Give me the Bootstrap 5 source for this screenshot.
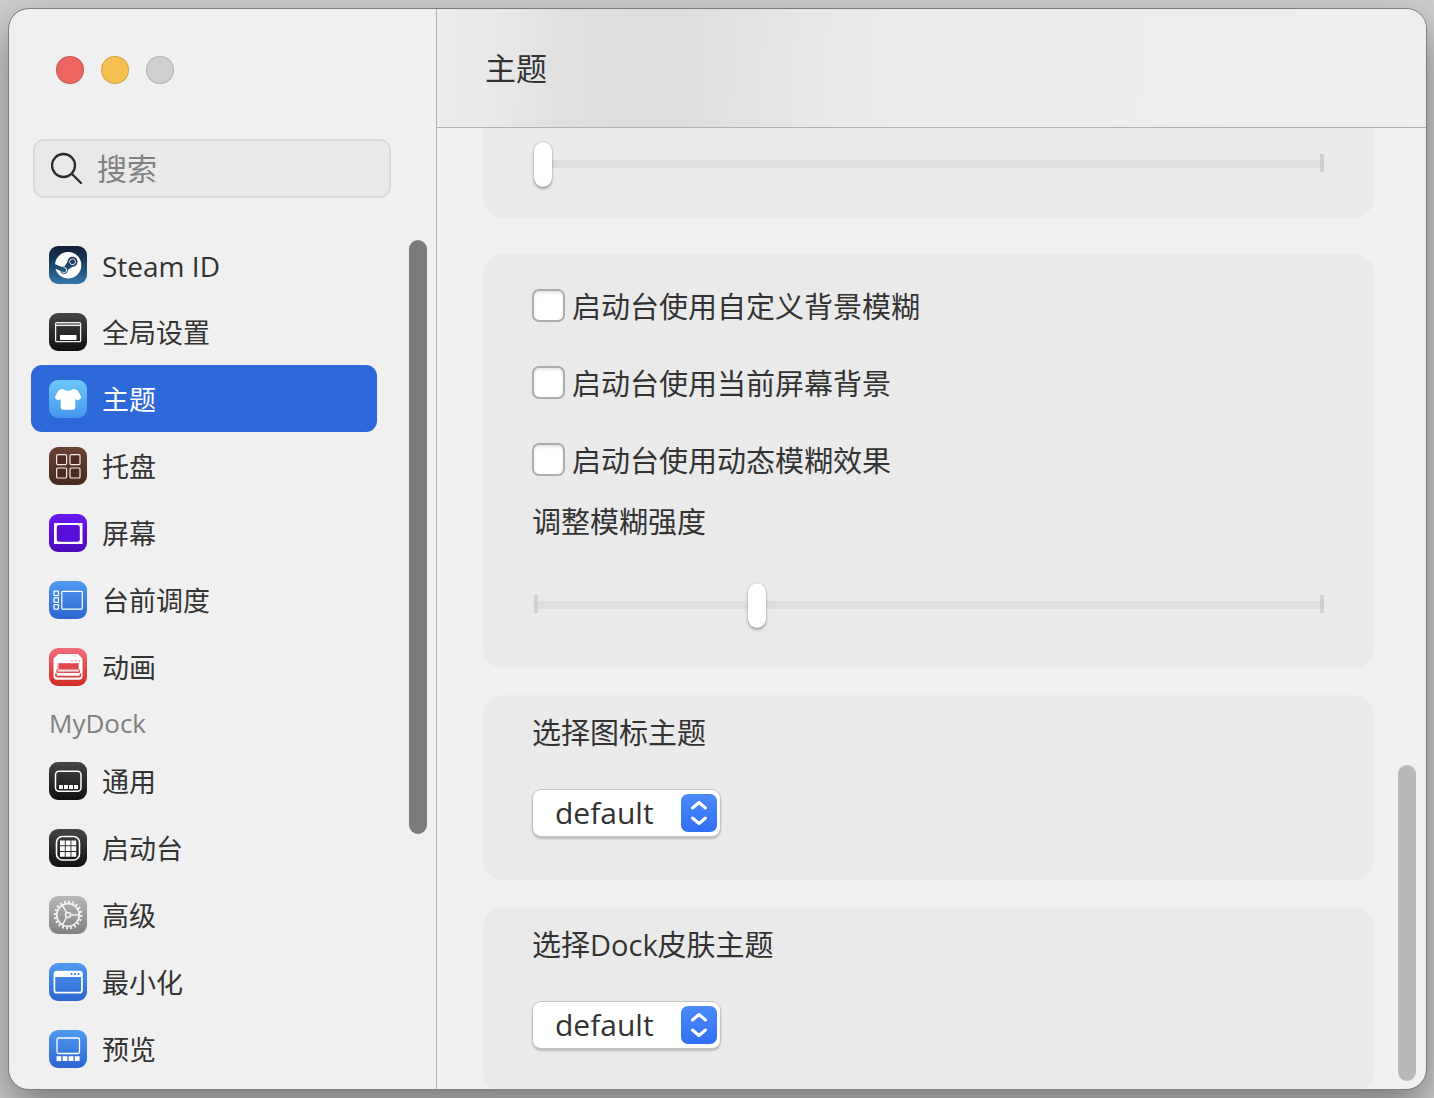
<!DOCTYPE html>
<html lang="zh-CN">
<head>
<meta charset="utf-8">
<meta name="viewport" content="width=device-width, initial-scale=1">
<title>主题</title>
<link href="https://cdn.jsdelivr.net/npm/bootstrap@5.3.0/dist/css/bootstrap.min.css" rel="stylesheet">
<style>
  body { font-family: "Open Sans", "Noto Sans CJK SC", sans-serif; color: #333; background: #cdcdcd; font-size: 29px; }
  .stage { height: 100vh; padding: 9px 8px 9px 9px; }
  .app-window { border-radius: 20px; background: #f0f0f0; box-shadow: 0 0 0 1px #7d7d7d, 0 18px 40px rgba(0,0,0,.42); }

  .sidebar { width: 428px; border-right: 1px solid #b4b4b4; }
  .lights { gap: 17px; padding: 47px 0 55px 47px; }
  .light { width: 28px; height: 28px; border: 1px solid rgba(0,0,0,.14); }
  .light-close { background: #ec6560; }
  .light-min { background: #f4c04f; }
  .light-zoom { background: #d0d0d0; }
  .search-box { margin: 0 45px 33px 24px; height: 59px; border: 2px solid #dadada; border-radius: 11px; background: #e9e9e9; padding-left: 16px; gap: 13px; }
  .search-box input, .search-box input:focus { background: transparent; font-size: 30px; color: #333; }
  .search-box input::placeholder { color: #808080; opacity: 1; }
  .side-nav { padding: 0 59px 0 22px; }
  .side-nav a { height: 67px; padding: 3px 0 0 18px; gap: 15px; border-radius: 11px; font-size: 27px; color: #333; }
  .side-nav a svg { margin-bottom: 3px; }
  .side-nav a.latin { font-size: 28px; }
  .side-nav a.active { background: #2e69d9; color: #fff; }
  .side-title { height: 47px; padding-left: 18px; font-size: 26px; color: #808080; }
  .scroll-thumb { width: 18px; border-radius: 9px; }
  .thumb-side { right: 9px; top: 231px; height: 594px; background: #7b7b7b; }
  .thumb-main { right: 10px; bottom: 8px; height: 316px; background: #b8b8b8; }

  .topbar { height: 119px; padding: 2px 0 0 48px; border-bottom: 1px solid #b0b0b0;
    background: linear-gradient(93deg, #ececec 0, #e8e8e8 70px, #e0e0e0 130px, #dedede 190px, #dedede 250px, #e4e4e4 330px, #e9e9e9 400px, #ececec 470px, #eeeeee 100%); }
  .topbar h1 { font-size: 31px; font-weight: 400; }
  .settings { padding: 0 52px 0 46px; gap: 27px; }
  .panel { background: #eaeaea; border-radius: 20px; padding: 14px 50px 43px 49px; }
  .panel-first { border-radius: 0 0 20px 20px; padding-bottom: 30px; margin-bottom: 9px; }
  .panel-blur { padding-top: 13px; padding-bottom: 39px; }
  .line-label { line-height: 48px; }
  .check-row { height: 77px; gap: 7px; }
  .check-row .form-check-input { width: 33px; height: 33px; border: 2px solid #adadad; border-radius: 7px; background-color: #fff; box-shadow: inset 0 2px 3px rgba(0,0,0,.1); }
  .check-row label { line-height: 44px; padding-top: 3px; }

  .slider { -webkit-appearance: none; appearance: none; width: calc(100% - 2px); height: 46px; margin: 0 0 0 2px;
    background: linear-gradient(#d0d0d0,#d0d0d0) left top 12px / 4px 18px no-repeat, linear-gradient(#d0d0d0,#d0d0d0) right top 12px / 4px 18px no-repeat; }
  .slider::-webkit-slider-runnable-track { height: 8px; margin-top: -3px;
    background: linear-gradient(90deg, #d0d0d0 4px, #dedede 4px, #dedede calc(100% - 4px), #d0d0d0 calc(100% - 4px)); }
  .slider::-webkit-slider-thumb { -webkit-appearance: none; width: 18px; height: 45px; margin-top: -18px; border: 0; border-radius: 9px; background: #fff; box-shadow: 0 2px 3px rgba(0,0,0,.3), 0 0 1px rgba(0,0,0,.4); }
  .blur-slider { margin-top: 37px; }

  .picker { width: 189px; margin-top: 32px; }
  .picker select, .picker select:focus { height: 48px; padding: 0 40px 0 22px; border: 1px solid #c4c4c4; border-radius: 9px; background: #fff; color: #333; font-size: 30px; line-height: 44px; box-shadow: 0 2px 2px rgba(0,0,0,.2); }
  .picker svg { right: 4px; top: 5px; pointer-events: none; }
</style>
</head>
<body>
<svg width="0" height="0" class="position-absolute" aria-hidden="true">
  <defs>
    <linearGradient id="g-steam" x2="0" y2="1"><stop stop-color="#141c33"/><stop offset=".5" stop-color="#1b4468"/><stop offset="1" stop-color="#3479ad"/></linearGradient>
    <linearGradient id="g-dark" x2="0" y2="1"><stop stop-color="#454545"/><stop offset="1" stop-color="#101010"/></linearGradient>
    <linearGradient id="g-sky" x2="0" y2="1"><stop stop-color="#6cc8fa"/><stop offset="1" stop-color="#4596ec"/></linearGradient>
    <linearGradient id="g-brown" x2="0" y2="1"><stop stop-color="#6b4136"/><stop offset="1" stop-color="#472a20"/></linearGradient>
    <linearGradient id="g-purple" x2="0" y2="1"><stop stop-color="#6a18f2"/><stop offset="1" stop-color="#4d0ab8"/></linearGradient>
    <linearGradient id="g-blue" x2="0" y2="1"><stop stop-color="#509af0"/><stop offset="1" stop-color="#2c65d0"/></linearGradient>
    <linearGradient id="g-red" x2="0" y2="1"><stop stop-color="#f06d7c"/><stop offset="1" stop-color="#d32c22"/></linearGradient>
    <linearGradient id="g-gray" x2="0" y2="1"><stop stop-color="#b8b8b8"/><stop offset="1" stop-color="#808080"/></linearGradient>
    <linearGradient id="g-pick" x2="0" y2="1"><stop stop-color="#4a8af8"/><stop offset="1" stop-color="#316ff3"/></linearGradient>
  </defs>
</svg>

<div class="stage">
  <div class="app-window d-flex h-100 overflow-hidden">
    <aside class="sidebar position-relative flex-shrink-0 overflow-hidden">
      <div class="lights d-flex">
        <button type="button" class="light light-close rounded-circle p-0" aria-label="关闭"></button>
        <button type="button" class="light light-min rounded-circle p-0" aria-label="最小化窗口"></button>
        <button type="button" class="light light-zoom rounded-circle p-0" aria-label="缩放" disabled></button>
      </div>
      <div class="search-box d-flex align-items-center">
        <svg class="flex-shrink-0" width="33" height="33" viewBox="0 0 33 33" fill="none" stroke="#2b2b2b" stroke-width="2.3" stroke-linecap="round"><circle cx="12.500" cy="13.500" r="11.5"/><path d="M21 22 30 31"/></svg>
        <input type="search" class="form-control border-0 shadow-none p-0" placeholder="搜索" aria-label="搜索">
      </div>

      <nav class="side-nav d-flex flex-column">
        <a href="#steam" class="d-flex align-items-center text-decoration-none latin">
          <svg width="38" height="38" viewBox="0 0 38 38"><rect width="38" height="38" rx="9" fill="url(#g-steam)"/><path fill="#fff" transform="translate(6 6) scale(1.1)" d="M11.979 0C5.678 0 .511 4.86.022 11.037l6.432 2.658c.545-.371 1.203-.59 1.912-.59.063 0 .125.004.188.006l2.861-4.142V8.91c0-2.495 2.028-4.524 4.524-4.524 2.494 0 4.524 2.031 4.524 4.527s-2.03 4.525-4.524 4.525h-.105l-4.076 2.911c0 .052.004.105.004.159 0 1.875-1.515 3.396-3.39 3.396-1.635 0-3.016-1.173-3.331-2.727L.436 15.27C1.862 20.307 6.486 24 11.979 24c6.627 0 11.999-5.373 11.999-12S18.605 0 11.979 0zM7.54 18.21l-1.473-.61c.262.543.714.999 1.314 1.25 1.297.539 2.793-.076 3.332-1.375.263-.63.264-1.319.005-1.949s-.75-1.121-1.377-1.383c-.624-.26-1.29-.249-1.878-.03l1.523.63c.956.4 1.409 1.5 1.009 2.455-.397.957-1.497 1.41-2.454 1.012H7.54zm11.415-9.303c0-1.662-1.353-3.015-3.015-3.015-1.665 0-3.015 1.353-3.015 3.015 0 1.665 1.35 3.015 3.015 3.015 1.663 0 3.015-1.35 3.015-3.015zm-5.273-.005c0-1.252 1.013-2.266 2.265-2.266 1.249 0 2.266 1.014 2.266 2.266 0 1.251-1.017 2.265-2.266 2.265-1.253 0-2.265-1.014-2.265-2.265z"/></svg>
          Steam ID</a>
        <a href="#global" class="d-flex align-items-center text-decoration-none">
          <svg width="38" height="38" viewBox="0 0 38 38"><rect width="38" height="38" rx="9" fill="url(#g-dark)"/><g fill="none" stroke="#eee" stroke-width="1.3"><rect x="6.6" y="9.6" width="25" height="19" rx="1.2"/><path d="M7 12.4h24.500"/></g><path d="M7.500 11h23.500" stroke="#999" stroke-width="1.200"/><rect x="11" y="22" width="16.500" height="5" fill="#fff"/></svg>
          全局设置</a>
        <a href="#theme" class="active d-flex align-items-center text-decoration-none" aria-current="page">
          <svg width="38" height="38" viewBox="0 0 38 38"><rect width="38" height="38" rx="9" fill="url(#g-sky)"/><path fill="#fff" d="M14.500 9c1 2.300 7.800 2.300 9 0 2.600.1 4.600.7 5.800 2.500 1.200 1.800 2.200 4 3 6.100-1 1.700-2.700 2.700-4.700 2.600l-1.300-1.600v9c0 1.400-.7 2.100-2.100 2.100H13.700c-1.400 0-2-.7-2-2.100v-9l-1.300 1.600c-2 .1-3.600-.9-4.500-2.600.8-2.100 1.800-4.300 3-6.100C10.100 9.700 12 9.100 14.500 9z"/></svg>
          主题</a>
        <a href="#tray" class="d-flex align-items-center text-decoration-none">
          <svg width="38" height="38" viewBox="0 0 38 38"><rect width="38" height="38" rx="9" fill="url(#g-brown)"/><g fill="#4d2b22" stroke="#f4e9e4" stroke-width="1.200"><rect x="7.600" y="7.600" width="10" height="10" rx="1.300"/><rect x="21" y="7.600" width="10" height="10" rx="1.300"/><rect x="7.600" y="21" width="10" height="10" rx="1.300"/><rect x="21" y="21" width="10" height="10" rx="1.300"/></g></svg>
          托盘</a>
        <a href="#screen" class="d-flex align-items-center text-decoration-none">
          <svg width="38" height="38" viewBox="0 0 38 38"><rect width="38" height="38" rx="9" fill="url(#g-purple)"/><rect x="5" y="9" width="28.500" height="21" fill="#fff"/><rect x="7.800" y="11" width="23" height="16.800" rx="2.500" fill="#5a0edc"/></svg>
          屏幕</a>
        <a href="#stage" class="d-flex align-items-center text-decoration-none">
          <svg width="38" height="38" viewBox="0 0 38 38"><rect width="38" height="38" rx="9" fill="url(#g-blue)"/><g fill="none" stroke="#fff" stroke-width="1.200"><rect x="12.800" y="10.300" width="20.500" height="17.800" rx=".8"/><rect x="5" y="10.200" width="4.500" height="4.500" rx=".6"/><rect x="5" y="16.900" width="4.500" height="4.500" rx=".6"/><rect x="5" y="23.600" width="4.500" height="4.500" rx=".6"/></g></svg>
          台前调度</a>
        <a href="#motion" class="d-flex align-items-center text-decoration-none">
          <svg width="38" height="38" viewBox="0 0 38 38"><rect width="38" height="38" rx="9" fill="url(#g-red)"/><path fill="#fff" d="M10 6h18.500c.9 0 1.400.7 1.800 1.500.9.500 1.700 1.300 2.200 2.100.7.500 1 1.200 1 2v17c0 2-1.200 3.200-3.200 3.200H7.700c-2 0-3.200-1.200-3.200-3.200v-17c0-.8.400-1.500 1-2C6 8.800 7 8 7.900 7.500 8.300 6.700 8.900 6 10 6z"/><path fill="#e0474f" d="M9.500 15.200h19.500v5.800H9.500z"/><path fill="#f08d92" d="M8.500 14.700h1v6.300H29v-6.300h1v7.500H8.500z"/><path d="M8 21.800v1.600c0 .6.400.9 1 .9h20.500c.6 0 1-.3 1-.9v-1.600" fill="none" stroke="#de4b50" stroke-width="1.400"/><path d="M7 25.500v1.700c0 .9.500 1.500 1.500 1.500H30c1 0 1.500-.6 1.500-1.500v-1.700" fill="none" stroke="#dc3f3e" stroke-width="1.700"/><path d="M22 12.700h1.800M26 12.700h1.800M29.800 12.700h1.400" stroke="#f3a3ac" stroke-width="1.500"/><path d="M21 8h7" stroke="#fbd9dc"/></svg>
          动画</a>
        <div class="side-title d-flex align-items-center">MyDock</div>
        <a href="#general" class="d-flex align-items-center text-decoration-none">
          <svg width="38" height="38" viewBox="0 0 38 38"><rect width="38" height="38" rx="9" fill="url(#g-dark)"/><rect x="6.500" y="9.200" width="25.500" height="20" rx="3.500" fill="none" stroke="#fff" stroke-width="1.500"/><path fill="#fff" d="M10 23h4v4h-4zM15 23h4v4h-4zM20 23h4v4h-4zM25 23h4v4h-4z"/></svg>
          通用</a>
        <a href="#launchpad" class="d-flex align-items-center text-decoration-none">
          <svg width="38" height="38" viewBox="0 0 38 38"><rect width="38" height="38" rx="9" fill="url(#g-dark)"/><rect x="7.500" y="7.500" width="23" height="23.500" rx="6" fill="none" stroke="#fff" stroke-width="1.600"/><path fill="#fff" d="M11 11.500h4.800v4.800H11zM16.700 11.500h4.800v4.800h-4.800zM22.400 11.500h4.800v4.800h-4.800zM11 17.200h4.800V22H11zM16.700 17.200h4.800V22h-4.800zM22.400 17.200h4.800V22h-4.800zM11 22.900h4.800v4.800H11zM16.700 22.900h4.800v4.800h-4.800zM22.400 22.900h4.800v4.800h-4.800z"/></svg>
          启动台</a>
        <a href="#advanced" class="d-flex align-items-center text-decoration-none">
          <svg width="38" height="38" viewBox="0 0 38 38"><rect width="38" height="38" rx="9" fill="url(#g-gray)"/><g fill="none" stroke="#f2f2f2" stroke-width="1.500"><circle cx="19" cy="19" r="11.300" stroke-width="1.700"/><circle cx="19" cy="19" r="13.200" stroke-width="2.400" pathLength="40" stroke-dasharray=".9 1.1"/><circle cx="19" cy="19" r="2.500"/><path d="M21.500 19h9M17.750 16.800l-4.500-7.800M17.750 21.200l-4.500 7.800"/></g></svg>
          高级</a>
        <a href="#minimize" class="d-flex align-items-center text-decoration-none">
          <svg width="38" height="38" viewBox="0 0 38 38"><rect width="38" height="38" rx="9" fill="url(#g-blue)"/><rect x="5.400" y="8.700" width="27.500" height="21" rx="2.300" fill="none" stroke="#fff" stroke-width="1.700"/><path d="M6 8.500h27V14H6z" fill="#fff"/><g fill="#3d7fdf"><circle cx="22.500" cy="11" r="1.100"/><circle cx="26" cy="11" r="1.100"/><circle cx="29.500" cy="11" r="1.100"/></g></svg>
          最小化</a>
        <a href="#preview" class="d-flex align-items-center text-decoration-none">
          <svg width="38" height="38" viewBox="0 0 38 38"><rect width="38" height="38" rx="9" fill="url(#g-blue)"/><rect x="8" y="8" width="22.500" height="15.500" rx="1.500" fill="none" stroke="#fff" stroke-width="1.300"/><path fill="#fff" d="M7.500 26.300h4.800v4.700H7.500zM13.600 26.300h4.800v4.700h-4.800zM19.700 26.300h4.800v4.700h-4.800zM25.800 26.300h4.800v4.700h-4.800z"/></svg>
          预览</a>
      </nav>
      <div class="scroll-thumb thumb-side position-absolute"></div>
    </aside>

    <main class="position-relative flex-grow-1 d-flex flex-column overflow-hidden">
      <header class="topbar d-flex align-items-center flex-shrink-0"><h1 class="m-0">主题</h1></header>
      <div class="settings d-flex flex-column flex-grow-1 overflow-hidden">
        <section class="panel panel-first flex-shrink-0 d-flex">
          <input type="range" class="slider" min="0" max="36" value="0" aria-label="大小">
        </section>

        <section class="panel panel-blur flex-shrink-0 d-flex flex-column">
          <div class="check-row d-flex align-items-center"><input class="form-check-input m-0 flex-shrink-0" type="checkbox" id="blur-custom"><label for="blur-custom">启动台使用自定义背景模糊</label></div>
          <div class="check-row d-flex align-items-center"><input class="form-check-input m-0 flex-shrink-0" type="checkbox" id="blur-screen"><label for="blur-screen">启动台使用当前屏幕背景</label></div>
          <div class="check-row d-flex align-items-center"><input class="form-check-input m-0 flex-shrink-0" type="checkbox" id="blur-live"><label for="blur-live">启动台使用动态模糊效果</label></div>
          <label class="line-label" for="blur-level">调整模糊强度</label>
          <input type="range" class="slider blur-slider" id="blur-level" min="0" max="36" value="10">
        </section>

        <section class="panel flex-shrink-0">
          <label class="line-label d-block" for="icon-theme">选择图标主题</label>
          <div class="picker position-relative">
            <select class="form-select" id="icon-theme"><option>default</option></select>
            <svg class="position-absolute" width="36" height="38" viewBox="0 0 36 38"><rect width="36" height="38" rx="7" fill="url(#g-pick)"/><path d="M11.500 14 18 8.500l6.500 5.500M11.500 24l6.500 5.500 6.500-5.500" fill="none" stroke="#fff" stroke-width="3" stroke-linecap="round" stroke-linejoin="round"/></svg>
          </div>
        </section>

        <section class="panel flex-shrink-0">
          <label class="line-label d-block" for="dock-theme">选择Dock皮肤主题</label>
          <div class="picker position-relative">
            <select class="form-select" id="dock-theme"><option>default</option></select>
            <svg class="position-absolute" width="36" height="38" viewBox="0 0 36 38"><rect width="36" height="38" rx="7" fill="url(#g-pick)"/><path d="M11.500 14 18 8.500l6.500 5.500M11.500 24l6.500 5.500 6.500-5.500" fill="none" stroke="#fff" stroke-width="3" stroke-linecap="round" stroke-linejoin="round"/></svg>
          </div>
        </section>
      </div>
      <div class="scroll-thumb thumb-main position-absolute"></div>
    </main>
  </div>
</div>
<script src="https://cdn.jsdelivr.net/npm/bootstrap@5.3.0/dist/js/bootstrap.bundle.min.js"></script>
</body>
</html>
